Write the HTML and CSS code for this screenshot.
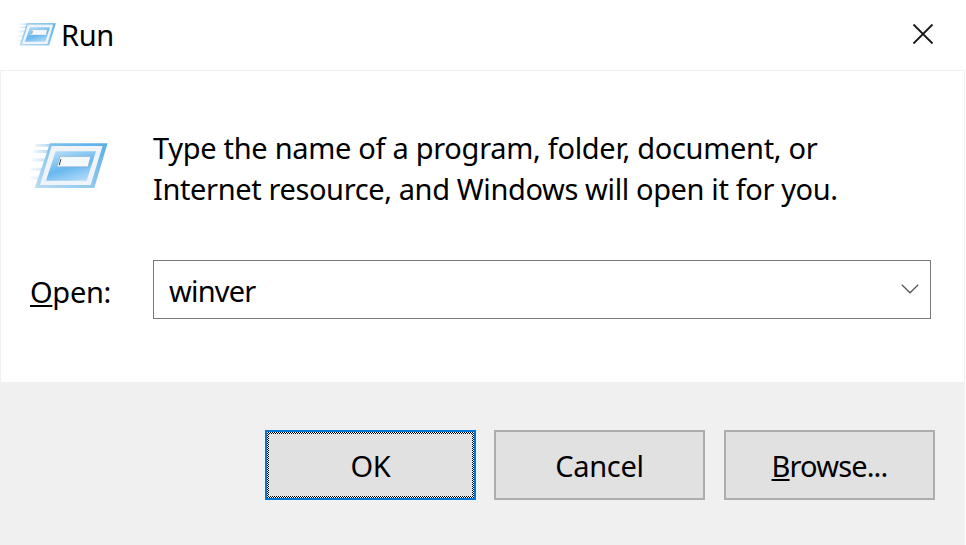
FILE: index.html
```html
<!DOCTYPE html>
<html lang="en">

<head>
    <meta charset="UTF-8">
    <title>Run</title>
    <link rel="stylesheet" href="styles.css">
</head>

<body>
    <svg class="defs" width="0" height="0">
        <defs>
            <linearGradient id="frameFill" x1="1" y1="0" x2="0" y2="1">
                <stop offset="0" stop-color="#55aeea"/>
                <stop offset="1" stop-color="#b9dcf4"/>
            </linearGradient>
            <linearGradient id="screenFill" x1="0.2" y1="0" x2="0.7" y2="1">
                <stop offset="0" stop-color="#b4dcf8"/>
                <stop offset="0.55" stop-color="#68b8f0"/>
                <stop offset="1" stop-color="#b0daf7"/>
            </linearGradient>
            <linearGradient id="trail" x1="0" y1="0" x2="1" y2="0">
                <stop offset="0" stop-color="#cfe6f8" stop-opacity="0.2"/>
                <stop offset="1" stop-color="#aed5f2"/>
            </linearGradient>
            <symbol id="runIcon" viewBox="30 35 235 145">
                <path d="M46 44h46v8H46zM40 62h44v9H40zM36 88h38v9H36zM32 116h32v9H32zM30 142h28v9H30z" fill="url(#trail)"/>
                <path d="M90 42H264L224 177H44z" fill="url(#frameFill)"/>
                <path d="M95 50H249L213 168H60z" fill="#f0f4f8"/>
                <path d="M107 66H229L201 155H78z" fill="url(#screenFill)"/>
                <path d="M121 82H213L205 113H111z" fill="#f4f9fd" stroke="#7f9fb5" stroke-width="1.500"/>
                <path d="M123 90L118 108" stroke="#333" stroke-width="3"/>
            </symbol>
        </defs>
    </svg>

    <div class="window">
        <div class="titlebar">
            <div class="title">
                <svg class="title-icon"><use href="#runIcon"/></svg>
                <span>Run</span>
            </div>
            <svg class="close" width="22" height="22" viewBox="0 0 22 22">
                <path d="M1.500 1.500L20.500 20.500M20.500 1.500L1.500 20.500" stroke="#1a1a1a" stroke-width="1.800" fill="none"/>
            </svg>
        </div>

        <div class="panel">
            <div class="intro">
                <svg class="big-icon"><use href="#runIcon"/></svg>
                <p>Type the name of a program, folder, document, or<br><span class="tight">Internet resource, and Windows will open it for you.</span></p>
            </div>
            <div class="open-row">
                <label for="openInput"><u>O</u>pen:</label>
                <div class="combo">
                    <input id="openInput" type="text" value="winver">
                    <svg class="chevron" width="18" height="10" viewBox="0 0 18 10">
                        <path d="M.8.800L9 8.800L17.200.800" stroke="#555" stroke-width="1.200" fill="none"/>
                    </svg>
                </div>
            </div>
        </div>

        <div class="footer">
            <button class="btn focused"><span>OK</span></button>
            <button class="btn">Cancel</button>
            <button class="btn browse"><u>B</u>rowse...</button>
        </div>
    </div>
</body>

</html>
```

FILE: styles.css
```css
* {
    box-sizing: border-box;
}

html,
body {
    margin: 0;
    height: 100%;
}

body {
    overflow: hidden;
    background-color: #fff;
    color: #000;
    font-family: "Noto Sans", "Open Sans", sans-serif;
    font-size: 29px;
    letter-spacing: -0.3px;
}

.defs {
    position: absolute;
}

.window {
    width: 965px;
    height: 545px;
    display: flex;
    flex-direction: column;
}

.titlebar {
    height: 70px;
    display: flex;
    align-items: center;
    justify-content: space-between;
    padding: 0 31px 0 17px;
}

.title {
    display: flex;
    align-items: center;
    gap: 5px;
    margin-top: -2px;
}

.title-icon {
    width: 39px;
    height: 24px;
}

.close {
    margin-top: -2px;
}

.panel {
    height: 312px;
    border: 1px solid #f0f0f0;
    border-bottom: 0;
    padding: 56px 33px 0 29px;
}

.intro {
    display: flex;
    gap: 45px;
}

.big-icon {
    width: 78px;
    height: 48px;
    margin-top: 14px;
}

.intro p {
    margin: 0;
    line-height: 41px;
}

.tight {
    letter-spacing: -0.38px;
}

.open-row {
    display: flex;
    align-items: center;
    margin-top: 51px;
}

.open-row label {
    width: 123px;
    padding-top: 4px;
}

.combo {
    position: relative;
    width: 778px;
    height: 59px;
}

.combo input {
    width: 100%;
    height: 100%;
    border: 1px solid #7a7a7a;
    outline: none;
    padding: 1px 50px 0 15px;
    font: inherit;
    letter-spacing: -0.8px;
    color: #000;
}

.chevron {
    position: absolute;
    right: 12px;
    top: 24px;
}

.footer {
    flex: 1;
    display: flex;
    justify-content: flex-end;
    gap: 18px;
    padding: 48px 30px 0 0;
    background-color: #f0f0f0;
}

.btn {
    position: relative;
    width: 211px;
    height: 70px;
    border: 2px solid #adadad;
    background-color: #e1e1e1;
    font: inherit;
    letter-spacing: inherit;
    color: #000;
    padding: 0;
}

.btn.browse {
    margin-left: 1px;
    letter-spacing: -0.85px;
}

.btn.focused {
    border-color: #0078d7;
}

/* checkered focus ring, 1px squares */
.btn.focused::before {
    content: "";
    position: absolute;
    inset: 0;
    padding: 2px;
    background: repeating-conic-gradient(#000 0 25%, #fff 0 50%) 0 0 / 2px 2px;
    -webkit-mask: linear-gradient(#000 0 0) content-box, linear-gradient(#000 0 0);
    mask: linear-gradient(#000 0 0) content-box exclude, linear-gradient(#000 0 0);
}
```
